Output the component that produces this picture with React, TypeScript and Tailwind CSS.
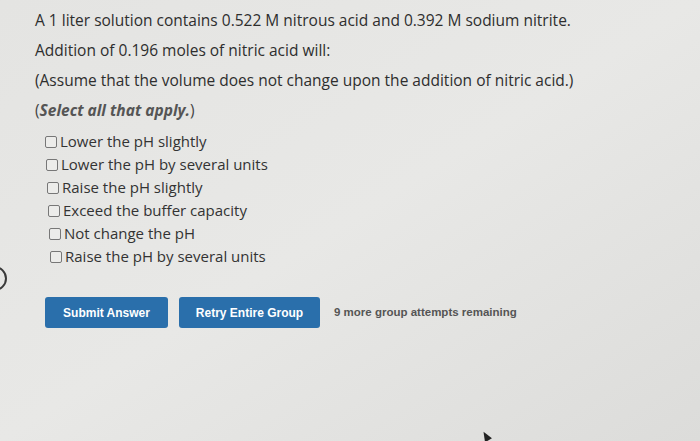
const options = [
  "Lower the pH slightly",
  "Lower the pH by several units",
  "Raise the pH slightly",
  "Exceed the buffer capacity",
  "Not change the pH",
  "Raise the pH by several units",
];

export default function App() {
  return (
    <div className="relative h-[441px] w-[700px] overflow-hidden bg-gradient-to-br from-[#e4e4e2] via-[#e8e8e6] to-[#dcdcda] font-['Open_Sans',sans-serif] text-[#2e2e2e]">
      <div className="absolute left-[-18px] top-[266px] h-[25px] w-[25px] rounded-full border-2 border-[#3a3a3a]" />

      <div className="pl-[35px] pt-[7px]">
        <p className="h-[30px] text-[15.5px] leading-[26px]">
          A 1 liter solution contains 0.522 M nitrous acid and 0.392 M sodium nitrite.
        </p>
        <p className="h-[30px] text-[15.5px] leading-[26px]">
          Addition of 0.196 moles of nitric acid will:
        </p>
        <p className="h-[30px] text-[15.5px] leading-[26px]">
          (Assume that the volume does not change upon the addition of nitric acid.)
        </p>
        <p className="h-[30px] text-[15.5px] leading-[26px] text-[#444]">
          (<span className="font-bold italic text-[#555]">Select all that apply.</span>)
        </p>

        <ul className="mt-[3px] flex flex-col pl-[10px]">
          {options.map((o, i) => (
            <li key={o} className="flex h-[23px] items-center gap-[3px] text-[15px] text-[#333]" style={{ paddingLeft: i }}>
              <span className="h-[12px] w-[12px] shrink-0 rounded-[2px] border border-[#777] bg-[#ececea]" />
              <span>{o}</span>
            </li>
          ))}
        </ul>

        <div className="mt-[29px] flex items-center gap-[11px] pl-[10px] font-['Liberation_Sans',Arial,sans-serif]">
          <button className="h-[31px] w-[123px] rounded-[3px] bg-[#2a6fab] text-[12px] font-bold text-white">
            Submit Answer
          </button>
          <button className="h-[31px] w-[141px] rounded-[3px] bg-[#2a6fab] text-[12px] font-bold text-white">
            Retry Entire Group
          </button>
          <span className="ml-[3px] text-[11.5px] font-bold text-[#555]">9 more group attempts remaining</span>
        </div>
      </div>

      <div className="absolute left-[482px] top-[431px] h-0 w-0 border-x-[4px] border-b-[10px] border-x-transparent border-b-[#222] rotate-[-30deg]" />
    </div>
  );
}
